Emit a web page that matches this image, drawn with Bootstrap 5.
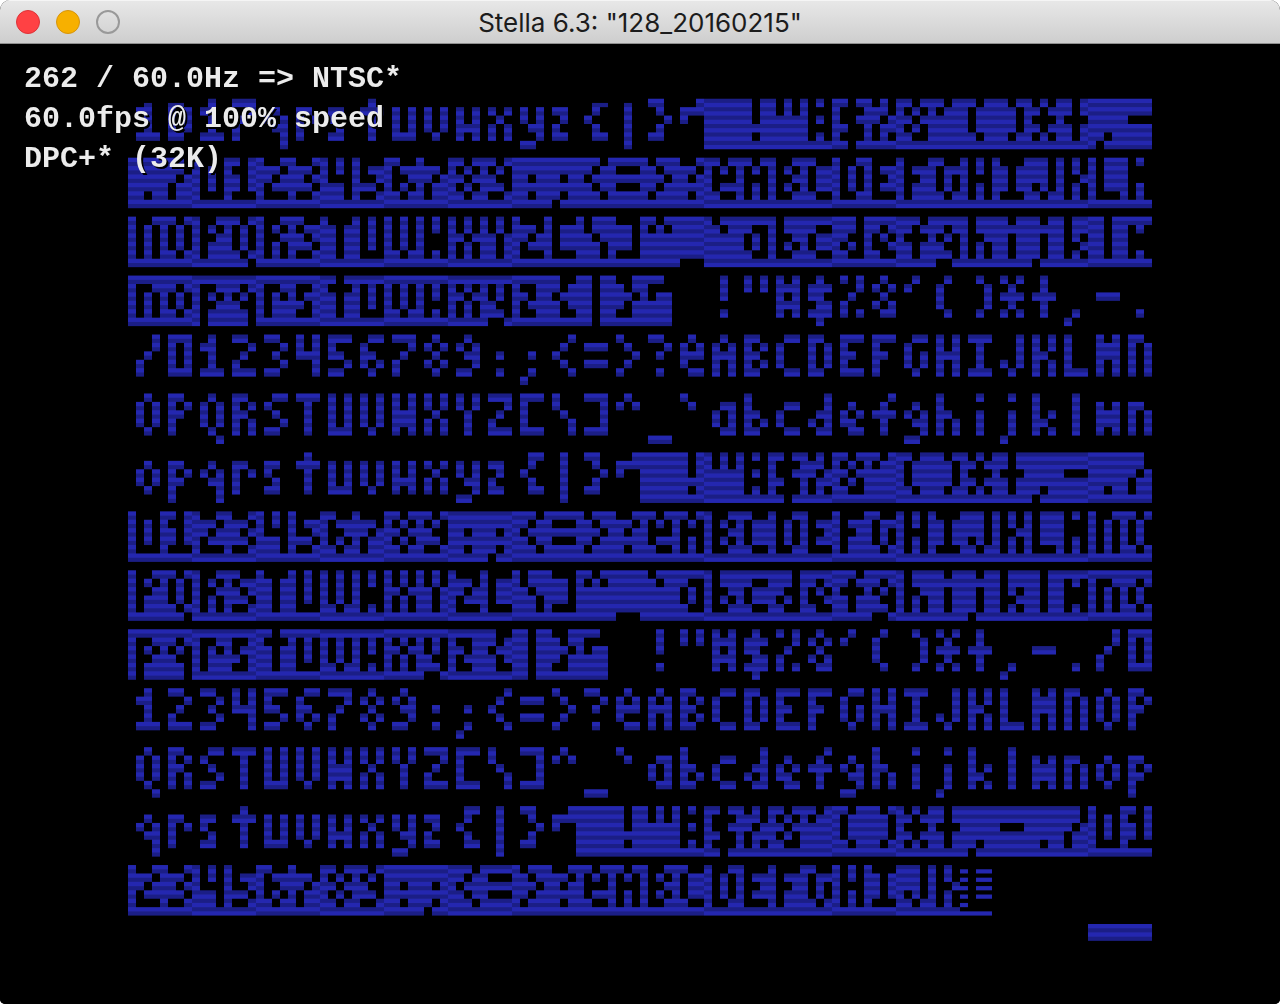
<!DOCTYPE html>
<html lang="en">
<head>
<meta charset="utf-8">
<meta name="viewport" content="width=device-width, initial-scale=1">
<title>Stella 6.3</title>
<link href="https://cdn.jsdelivr.net/npm/bootstrap@5.3.0/dist/css/bootstrap.min.css" rel="stylesheet">
<style>
  body { background: #fff; }
  .app-window { border-radius: 10px 10px 5px 5px; background: #000; }
  .title-bar {
    height: 44px; padding: 0 16px;
    background: linear-gradient(#e8e8e8, #cecece);
    border-bottom: 1px solid #8f8f8f;
    box-shadow: inset 0 1px 0 #f5f5f5;
  }
  .title-side { flex: 1 1 0; gap: 16px; }
  .light-btn { width: 24px; height: 24px; border: 1px solid; border-radius: 50%; padding: 0; }
  .light-close { background: #ff4144; border-color: #dd3338; }
  .light-min { background: #f7b000; border-color: #d6940c; }
  .light-zoom { background: transparent; border: 2px solid #999; }
  .title-text { font: 400 26px/32px Inter, sans-serif; padding-top: 2px; color: #1c1c1c; }
  .tv { display: block; width: 100%; }
  .osd {
    top: 0; left: 0; padding: 15px 24px;
    font: 700 30px/40px "Liberation Mono", monospace;
    color: #ececec; text-shadow: 2px 2px 0 #000; white-space: nowrap;
  }
</style>
<script src="https://cdn.jsdelivr.net/npm/bootstrap@5.3.0/dist/js/bootstrap.bundle.min.js"></script>
</head>
<body>
<main class="app-window overflow-hidden">
  <header class="title-bar d-flex align-items-center">
    <div class="title-side d-flex">
      <button type="button" class="light-btn light-close" aria-label="Close"></button>
      <button type="button" class="light-btn light-min" aria-label="Minimize"></button>
      <button type="button" class="light-btn light-zoom" aria-label="Zoom"></button>
    </div>
    <h1 class="title-text m-0">Stella 6.3: "128_20160215"</h1>
    <div class="title-side"></div>
  </header>
  <section class="position-relative">
    <canvas class="tv" id="tv" width="1280" height="960"></canvas>
    <div class="osd position-absolute">
      <div>262 / 60.0Hz =&gt; NTSC*</div>
      <div>60.0fps @ 100% speed</div>
      <div>DPC+* (32K)</div>
    </div>
  </section>
</main>
<script>
// 3-pixel-wide font, one octal digit per row (4 = left, 2 = middle, 1 = right), from space to tilde.
const FONT = (
  "0 22202 55 57575 276372 51245 25253 24 24442 21112 52725 22722 000024 007 00002 11244 " +
  "75557 26227 61247 61216 55711 74616 34652 71244 25252 25316 00202 002024 12421 0707 42124 61202 " +
  "25743 25755 65656 34443 65556 74647 74644 34552 55755 72227 11152 55655 44447 57755 65555 25552 " +
  "65644 255521 65655 34216 72222 55557 55552 55775 55255 55222 71247 74447 44211 71117 25 000007 42 " +
  "03553 44656 03443 11353 02563 12722 025316 44655 20222 202224 44565 22222 05775 06555 02552 " +
  "065644 025311 06544 06426 27222 05557 05552 05575 05255 055316 06246 32423 222222 62126 174"
).split(" ");
const LIGHT = "#2427b0", DARK = "#1b1e86";
// Which of the sixteen 64-pixel bands starts on a light scanline.
const PHASE = [1,0,1,0,1,0,1,1,1,0,0,1,0,0,0,1];
const line = 960 / 228;
const g = document.getElementById("tv").getContext("2d");
g.fillStyle = "#000";
g.fillRect(0, 0, 1280, 960);
g.globalCompositeOperation = "lighter";

function pixel(x, scan, band) {
  const light = ((scan - 13) % 2 === 0) === !!PHASE[band];
  g.fillStyle = light ? LIGHT : DARK;
  g.fillRect(x, scan * line, 8, line);
}

// The message: four counter digits, then the character set in normal and inverse video by turns.
const cells = [..."1D17"].map(c => [c, false]);
let code = 113, inverse = false;
while (cells.length < 14 * 32 - 5) {
  cells.push([String.fromCharCode(code), inverse]);
  if (++code > 126) { code = 32; inverse = !inverse; }
}

cells.forEach(([ch, inv], i) => {
  const row = Math.floor(i / 32), col = i % 32, band = col >> 1;
  const glyph = FONT[ch.charCodeAt(0) - 32];
  const last = i === cells.length - 1;
  for (let y = 0; y < 12; y++) {
    if (row === 0 && y === 0 && (band === 0 || band === 7)) continue;
    if (last && y % 2 === 0) continue;
    const bits = +(glyph[y >> 1] || 0);
    for (let x = 0; x < 4; x++) {
      const on = (bits >> (3 - x)) & 1;
      if (on !== (inv ? 1 : 0)) pixel(128 + col * 32 + x * 8, 13 + row * 14 + y, band);
    }
  }
});
for (let y = 0; y < 4; y++)
  for (let x = 0; x < 8; x++) pixel(1088 + x * 8, 209 + y, 15);
</script>
</body>
</html>
